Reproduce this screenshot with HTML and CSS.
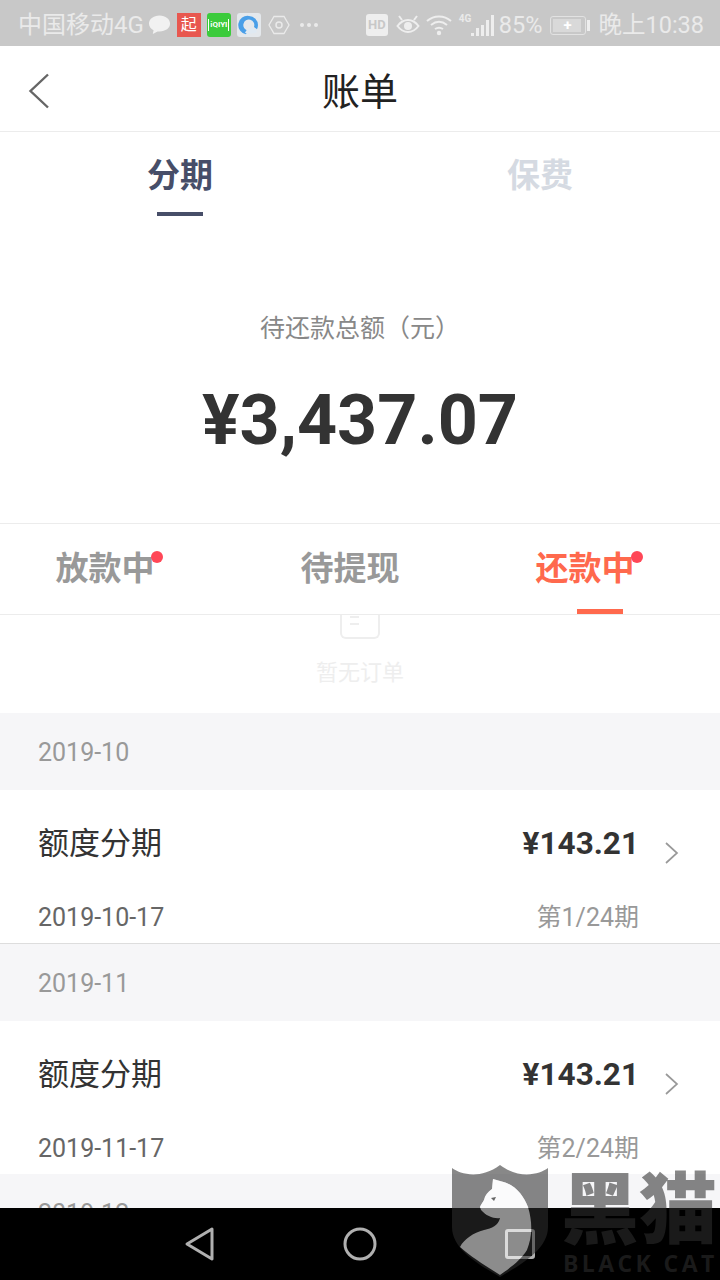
FILE: index.html
```html
<!DOCTYPE html>
<html lang="zh">
<head>
    <meta charset="UTF-8">
    <meta name="viewport" content="width=device-width, initial-scale=1.0">
    <title>账单</title>
    <link rel="stylesheet" href="styles.css">
</head>
<body>
<div class="screen">
    <div class="status">
        <div class="status-left">
            <span>中国移动4G</span>
            <svg class="ic-chat" width="23" height="22" viewBox="0 0 24 22"><path d="M12 1C5.600 1 1 4.800 1 9.500c0 3 1.900 5.500 4.800 7l-.8 4 5-2.800c.7.100 1.300.1 2 .1 6.400 0 11-3.600 11-8.300S18.400 1 12 1z" fill="#f1f1f1"/></svg>
            <span class="app app-qi">起</span>
            <span class="app app-iqiyi"><span>iQIYI</span></span>
            <span class="app app-qq">
                <svg width="24" height="24" viewBox="0 0 24 24"><path d="M12 3a9 9 0 0 1 9 9c0 1.500-.4 3-1 4.200l-3-2.300a5.500 5.500 0 1 0-6 3.600l-2 3.700A9 9 0 0 1 12 3z" fill="#4a9fe8"/><path d="M8 20c3 1 9 1 12-1-1-3-4-5-6-4-3 0-5 2-6 5z" fill="#dfe9f2"/></svg>
            </span>
            <svg class="ic-hex" width="22" height="20" viewBox="0 0 22 20"><path d="M6 1.500h10l5 8.500-5 8.500H6L1 10z" fill="none" stroke="#eaeaea" stroke-width="1.300"/><circle cx="11" cy="10" r="3" fill="none" stroke="#eaeaea" stroke-width="1.500"/></svg>
            <span class="dots"><i></i><i></i><i></i></span>
        </div>
        <div class="status-right">
            <span class="hd">HD</span>
            <svg class="ic-eye" width="24" height="22" viewBox="0 0 24 22"><path d="M1.500 12c3-4 6.500-6 10.500-6s7.500 2 10.500 6c-3 4-6.500 6-10.500 6s-7.500-2-10.500-6z" fill="none" stroke="#eee" stroke-width="2"/><circle cx="12" cy="12" r="4" fill="#eee"/><path d="M3 2l3 4M21 2l-3 4" stroke="#eee" stroke-width="2"/></svg>
            <svg class="ic-wifi" width="26" height="22" viewBox="0 0 26 22"><path d="M1 7c7-6 17-6 24 0M5 11c5-4 11-4 16 0M9 15c3-2 5-2 8 0" fill="none" stroke="#eee" stroke-width="2"/><circle cx="13" cy="19" r="2.200" fill="#eee"/></svg>
            <span class="signal">
                <b>4G</b>
                <i class="s1"></i><i class="s2"></i><i class="s3"></i><i class="s4"></i><i class="s5"></i>
            </span>
            <span class="percent">85%</span>
            <span class="battery"><span class="battery-fill">+</span></span>
            <span class="time">晚上10:38</span>
        </div>
    </div>

    <header class="title-bar">
        <svg class="back" width="22" height="36" viewBox="0 0 22 36"><path d="M20 1.500 2.500 18 20 34.500" fill="none" stroke="#666" stroke-width="2.400"/></svg>
        <h1>账单</h1>
    </header>

    <nav class="top-tabs">
        <a class="active">分期</a>
        <a>保费</a>
    </nav>

    <section class="summary">
        <p class="summary-label">待还款总额（元）</p>
        <p class="summary-amount">¥3,437.07</p>
    </section>

    <nav class="sub-tabs">
        <a><span class="dot-wrap">放款中<i class="dot"></i></span></a>
        <a><span class="dot-wrap plain">待提现</span></a>
        <a class="active"><span class="dot-wrap">还款中<i class="dot"></i></span></a>
    </nav>

    <div class="empty">
        <div class="empty-icon"><i></i><i></i></div>
        <p>暂无订单</p>
    </div>

    <div class="month">2019-10</div>
    <div class="bill bill-line">
        <div class="bill-row">
            <span class="bill-name">额度分期</span>
            <span class="bill-price">¥143.21</span>
        </div>
        <div class="bill-row bill-sub">
            <span class="bill-date">2019-10-17</span>
            <span class="bill-term">第1/24期</span>
        </div>
        <svg class="chevron" width="16" height="24" viewBox="0 0 16 24"><path d="M2 2l11 10L2 22" fill="none" stroke="#999" stroke-width="1.700"/></svg>
    </div>

    <div class="month">2019-11</div>
    <div class="bill">
        <div class="bill-row">
            <span class="bill-name">额度分期</span>
            <span class="bill-price">¥143.21</span>
        </div>
        <div class="bill-row bill-sub">
            <span class="bill-date">2019-11-17</span>
            <span class="bill-term">第2/24期</span>
        </div>
        <svg class="chevron" width="16" height="24" viewBox="0 0 16 24"><path d="M2 2l11 10L2 22" fill="none" stroke="#999" stroke-width="1.700"/></svg>
    </div>

    <div class="month">2019-12</div>

    <div class="nav-bar">
        <svg width="32" height="36" viewBox="0 0 32 36"><path d="M28 3 3 18l25 15z" fill="none" stroke="#b0b0b0" stroke-width="3" stroke-linejoin="round"/></svg>
        <svg width="34" height="34" viewBox="0 0 34 34"><circle cx="17" cy="17" r="15" fill="none" stroke="#b0b0b0" stroke-width="3"/></svg>
        <span class="nav-square"></span>
    </div>

    <!-- watermark -->
    <div class="mark">
        <svg class="mark-shield" width="100" height="114" viewBox="0 0 100 114">
            <path fill-rule="evenodd" d="M2 3C10 9 30 15 50 0c20 15 40 9 48 3v59c0 23-28 38-48 50C30 100 2 85 2 62z M43 14l7 2c15 3 23 14 28 26 5 16 4 31-1 43-6 10-17 18-27 25-14-9-29-18-40-28 4-8 13-14 24-17 8-2 14-4 16-12-6 1-14-2-19-8l-1-3c1-3 3-5 4-7 1-5 4-8 8-11z" fill="#2e2e2e" fill-opacity=".57"/>
            <path d="M43 14l7 2c15 3 23 14 28 26 5 16 4 31-1 43-6 10-17 18-27 25-14-9-29-18-40-28 4-8 13-14 24-17 8-2 14-4 16-12-6 1-14-2-19-8l-1-3c1-3 3-5 4-7 1-5 4-8 8-11z" fill="#fff" fill-opacity=".55"/>
            <path d="M41 33l5-1-2 4z" fill="#666"/>
        </svg>
        <div class="mark-text">
            <span class="mark-cn">黑猫</span>
            <span class="mark-en">BLACK CAT</span>
        </div>
    </div>
</div>
</body>
</html>
```

FILE: styles.css
```css
* {
    box-sizing: border-box;
}

html, body {
    margin: 0;
    padding: 0;
}

body {
    font-family: Roboto, "Noto Sans CJK SC", sans-serif;
    background-color: #fff;
}

p, h1 {
    margin: 0;
    font-weight: normal;
}

.screen {
    position: relative;
    width: 720px;
    height: 1280px;
    overflow: hidden;
    background-color: #fff;
}

/* Status bar */
.status {
    height: 46px;
    padding: 4px 16px 0 18px;
    background-color: #c8c8c8;
    color: #eaeaea;
    font-size: 24px;
    line-height: 30px;
    display: flex;
    justify-content: space-between;
    align-items: center;
}

.status-left, .status-right {
    display: flex;
    align-items: center;
}

.ic-chat {
    margin: 0 6px 0 4px;
}

.app {
    width: 24px;
    height: 24px;
    margin-right: 6px;
    display: flex;
    align-items: center;
    justify-content: center;
    border-radius: 3px;
    color: #fff;
    font-size: 16px;
    overflow: hidden;
}

.app-qi {
    background-color: #e8574f;
    border-radius: 0;
}

.app-iqiyi {
    background-color: #3ccb3c;
    font-size: 8px;
    line-height: 12px;
    font-weight: bold;
}

.app-iqiyi span {
    padding: 0 1px;
    border-left: 1px solid #fff;
    border-right: 1px solid #fff;
}

.app-qq {
    background-color: #e4e8ec;
}

.ic-hex {
    margin: 0 10px 0 1px;
}

.dots {
    display: flex;
    gap: 3px;
}

.dots i {
    width: 4px;
    height: 4px;
    border-radius: 50%;
    background-color: #eaeaea;
}

.status-right {
    font-size: 23.5px;
}

.hd {
    width: 22px;
    height: 22px;
    margin-right: 8px;
    border-radius: 3px;
    background-color: #eee;
    color: #c8c8c8;
    font-size: 13px;
    line-height: 22px;
    font-weight: bold;
    text-align: center;
}

.ic-eye {
    margin-right: 6px;
}

.ic-wifi {
    margin-right: 7px;
}

.signal {
    position: relative;
    width: 35px;
    height: 22px;
    padding-left: 12px;
    display: flex;
    align-items: flex-end;
    gap: 2px;
    margin-right: 5px;
}

.signal b {
    position: absolute;
    left: 0;
    top: -1px;
    font-size: 10px;
    line-height: 12px;
}

.signal i {
    width: 3px;
    background-color: #eee;
}

.signal .s1 { height: 3px; }
.signal .s2 { height: 8px; }
.signal .s3 { height: 11px; }
.signal .s4 { height: 16px; }
.signal .s5 { height: 21px; }

.percent {
    margin-right: 8px;
}

.battery {
    position: relative;
    width: 36px;
    height: 19px;
    margin-right: 12px;
    padding: 2px;
    border: 1px solid #e2e2e2;
    border-radius: 3px;
}

.battery::after {
    content: "";
    position: absolute;
    right: -5px;
    top: 3px;
    width: 3px;
    height: 11px;
    background-color: #eee;
}

.battery-fill {
    display: block;
    width: 28px;
    height: 13px;
    background-color: #d9d9d9;
    color: #fff;
    font-size: 15px;
    font-weight: bold;
    line-height: 13px;
    text-align: center;
}

/* Title bar */
.title-bar {
    position: relative;
    height: 86px;
    border-bottom: 1px solid #ececec;
    display: flex;
    align-items: center;
    justify-content: center;
}

.title-bar h1 {
    font-size: 38px;
    color: #222;
}

.back {
    position: absolute;
    left: 28px;
    top: 27px;
}

/* Top tabs */
.top-tabs {
    display: flex;
    height: 84px;
}

.top-tabs a {
    position: relative;
    flex: 1;
    padding-top: 20px;
    text-align: center;
    font-size: 33px;
    line-height: 48px;
    font-weight: bold;
    color: #d5dae2;
}

.top-tabs a.active {
    color: #474e68;
}

.top-tabs a.active::after {
    content: "";
    position: absolute;
    left: 50%;
    top: 80px;
    width: 46px;
    height: 4px;
    margin-left: -23px;
    background-color: #474e68;
}

/* Total */
.summary {
    height: 307px;
    padding-top: 93px;
    text-align: center;
}

.summary-label {
    font-size: 25px;
    line-height: 40px;
    color: #888;
}

.summary-amount {
    margin-top: 28px;
    font-size: 70px;
    line-height: 86px;
    font-weight: bold;
    color: #333;
}

/* Status tabs */
.sub-tabs {
    display: flex;
    height: 92px;
    border-top: 1px solid #ececec;
    border-bottom: 1px solid #ececec;
}

.sub-tabs a {
    position: relative;
    flex: 1;
    text-align: center;
    padding-top: 21px;
    font-size: 33px;
    line-height: 48px;
    font-weight: bold;
    color: #999;
}

.sub-tabs a.active {
    color: #ff694d;
}

.sub-tabs a.active::after {
    content: "";
    position: absolute;
    left: 50%;
    bottom: 0;
    width: 46px;
    height: 5px;
    margin-left: -23px;
    background-color: #ff694d;
}

.dot-wrap {
    position: relative;
    display: inline-block;
    margin-right: 30px;
}

.dot-wrap.plain {
    margin-right: 20px;
}

.dot {
    position: absolute;
    right: -8px;
    top: 6px;
    width: 12px;
    height: 12px;
    border-radius: 50%;
    background-color: #ff4757;
}

/* Empty state, scrolled mostly out of view */
.empty {
    height: 98px;
    overflow: hidden;
    text-align: center;
    color: #eee;
}

.empty-icon {
    width: 40px;
    height: 24px;
    margin: 0 auto;
    padding-top: 1px;
    border: 2px solid #eee;
    border-top: 0;
    border-radius: 0 0 6px 6px;
}

.empty-icon i {
    display: block;
    width: 9px;
    height: 2px;
    margin: 0 0 5px 8px;
    background-color: #eee;
}

.empty p {
    margin-top: 18px;
    font-size: 22px;
    line-height: 32px;
}

/* Bills */
.month {
    height: 77px;
    padding: 22px 0 0 38px;
    background-color: #f6f6f8;
    color: #999;
    font-size: 25px;
    line-height: 36px;
}

.bill {
    position: relative;
    height: 153px;
    padding: 0 81px 0 38px;
}

.bill-line {
    height: 154px;
    border-bottom: 1px solid #ddd;
}

.bill-row {
    display: flex;
    justify-content: space-between;
    align-items: center;
    height: 76px;
    padding-top: 32px;
    line-height: 46px;
}

.bill-sub {
    height: 65px;
    padding-top: 39px;
    line-height: 36px;
}

.bill-name {
    font-size: 31px;
    color: #333;
}

.bill-price {
    font-size: 31.500px;
    font-weight: bold;
    color: #333;
}

.bill-date {
    font-size: 25px;
    color: #666;
}

.bill-term {
    font-size: 25px;
    color: #999;
}

.chevron {
    position: absolute;
    right: 40px;
    top: 51px;
}

/* Android nav */
.nav-bar {
    position: absolute;
    left: 0;
    bottom: 0;
    width: 100%;
    height: 72px;
    padding: 0 120px;
    background-color: #000;
    display: grid;
    grid-template-columns: repeat(3, 1fr);
    justify-items: center;
    align-items: center;
}

.nav-square {
    width: 30px;
    height: 30px;
    border: 3px solid #b0b0b0;
    border-radius: 3px;
}

/* Watermark */
.mark {
    position: absolute;
    left: 450px;
    top: 1165px;
    display: flex;
    gap: 11px;
}

.mark-text {
    display: flex;
    flex-direction: column;
    opacity: .57;
    color: #2e2e2e;
}

.mark-cn {
    margin-top: 10px;
    font-size: 78px;
    line-height: 74px;
    font-weight: 900;
    white-space: nowrap;
}

.mark-en {
    padding-left: 2px;
    font-family: "Open Sans", sans-serif;
    font-size: 23px;
    line-height: 28px;
    font-weight: bold;
    letter-spacing: 3.400px;
    white-space: nowrap;
}
```
